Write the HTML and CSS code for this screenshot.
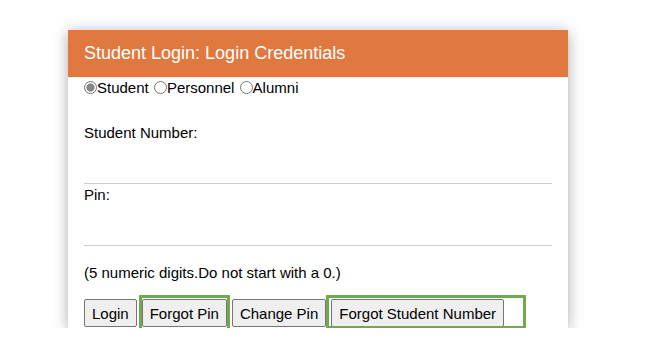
FILE: index.html
```html
<!DOCTYPE html>
<html>
<head>
<meta charset="utf-8">
<title>Student Login</title>
<link rel="stylesheet" href="styles.css">
</head>
<body>
<div class="page">
  <div class="card">
    <div class="card-header">Student Login: Login Credentials</div>
    <div class="card-body">
      <div class="roles">
        <label class="role"><input type="radio" name="role" class="radio" checked>Student</label>
        <label class="role"><input type="radio" name="role" class="radio">Personnel</label>
        <label class="role"><input type="radio" name="role" class="radio">Alumni</label>
      </div>
      <div class="field-label first">Student Number:</div>
      <input class="field-input" type="text">
      <div class="field-label">Pin:</div>
      <input class="field-input" type="password">
      <div class="hint">(5 numeric digits.Do not start with a 0.)</div>
      <div class="actions">
        <button class="btn">Login</button>
        <span class="mark mark-pin"><button class="btn">Forgot Pin</button></span>
        <button class="btn">Change Pin</button>
        <span class="mark mark-num"><button class="btn">Forgot Student Number</button></span>
      </div>
    </div>
  </div>
</div>
</body>
</html>
```
FILE: styles.css
```css
html, body {
  margin: 0;
  padding: 0;
  background: #ffffff;
}
body {
  font-family: "Liberation Sans", Arial, sans-serif;
  font-size: 15px;
  color: #000;
}
.page {
  padding: 30px 0 0 68px;
}
.card {
  width: 500px;
  background: #fff;
  box-shadow: 0 2px 14px rgba(0, 0, 0, 0.33);
}
.card-header {
  background: #e0793f;
  color: #fff;
  font-size: 18px;
  line-height: 21px;
  padding: 13px 16px;
}
.card-body {
  padding: 2px 16px 1px;
}
.roles {
  line-height: 17px;
  height: 17px;
  white-space: nowrap;
}
.role {
  margin-right: 1px;
}
.radio {
  -webkit-appearance: none;
  appearance: none;
  width: 13px;
  height: 13px;
  margin: 0;
  border: 1px solid #767676;
  border-radius: 50%;
  background: #fff;
  vertical-align: -1px;
  box-sizing: border-box;
}
.radio:checked {
  background: radial-gradient(circle, #858585 0, #858585 3.8px, #fff 4.4px);
}
.field-label {
  line-height: 17px;
  margin-top: 2px;
}
.field-label.first {
  margin-top: 28px;
}
.field-input {
  display: block;
  width: 100%;
  height: 43px;
  box-sizing: border-box;
  border: none;
  border-bottom: 1px solid #cccccc;
  padding: 0;
  margin: 0;
  outline: none;
  font: inherit;
}
.hint {
  line-height: 17px;
  margin-top: 18px;
}
.actions {
  display: flex;
  gap: 5px;
  margin-top: 18px;
  align-items: flex-start;
}
.btn {
  font-family: "Liberation Sans", Arial, sans-serif;
  font-size: 15px;
  height: 28px;
  padding: 0 7px;
  border: 1px solid #767676;
  border-radius: 2px;
  background: #efefef;
  color: #000;
}
.mark {
  position: relative;
  display: block;
}
.mark .btn {
  display: block;
}
.mark::after {
  content: "";
  position: absolute;
  border: 3px solid #6fab4a;
  pointer-events: none;
}
.mark-pin::after {
  left: -3px;
  right: -3px;
  top: -4px;
  bottom: -6px;
}
.mark-num::after {
  left: -5px;
  right: -22px;
  top: -4px;
  bottom: -2px;
}
```
